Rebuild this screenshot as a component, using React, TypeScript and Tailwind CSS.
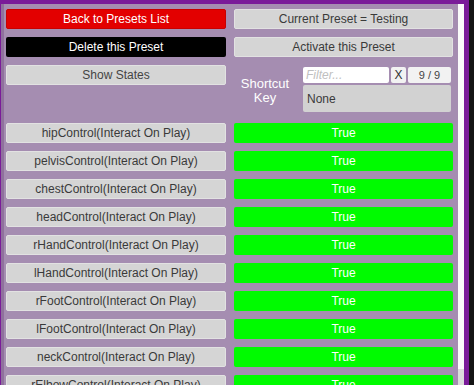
import React from "react";

const controls = [
  "hipControl",
  "pelvisControl",
  "chestControl",
  "headControl",
  "rHandControl",
  "lHandControl",
  "rFootControl",
  "lFootControl",
  "neckControl",
  "rElbowControl",
];

export default function App() {
  return (
    <div
      className="w-[474px] h-[385px] overflow-hidden bg-[#141414] flex text-[12px] leading-none"
      style={{ fontFamily: '"Liberation Sans", Arial, sans-serif' }}
    >
      {/* Window frame */}
      <div className="w-[469px] h-full bg-[#7a1b99] flex pt-[4px] pl-[1px] pr-[5px]">
        {/* Panel */}
        <div className="flex-1 bg-[#a58db1] border-l-[3px] border-[#8f719d] pl-[2px] pr-[5px] pt-[5px] flex flex-col">
          <div className="grid grid-cols-[220px_219px] gap-x-[8px]">
            <div className="flex flex-col gap-[8px]">
              <button className="h-[20px] rounded-[2px] bg-[#e30000] text-white border border-[#c80000]">
                Back to Presets List
              </button>
              <button className="h-[20px] rounded-[2px] bg-black text-white">Delete this Preset</button>
              <button className="h-[20px] rounded-[2px] bg-[#d5d5d5] text-[#444] border border-[#e2e2e2]">
                Show States
              </button>
            </div>
            <div className="flex flex-col gap-[8px]">
              <button className="h-[20px] rounded-[2px] bg-[#d5d5d5] text-[#3a3a3a] border border-[#e2e2e2]">
                Current Preset = Testing
              </button>
              <button className="h-[20px] rounded-[2px] bg-[#d5d5d5] text-[#3a3a3a] border border-[#e2e2e2]">
                Activate this Preset
              </button>
              {/* Shortcut key */}
              <div className="flex h-[48px]">
                <div className="w-[62px] flex flex-col items-center justify-center text-white text-[13px] leading-[14px] pt-[4px]">
                  <span>Shortcut</span>
                  <span>Key</span>
                </div>
                <div className="w-[148px] ml-[7px] flex flex-col pt-[2px]">
                  <div className="flex h-[16px] items-center">
                    <div className="w-[86px] h-full bg-white rounded-[2px] text-[#c0c0c0] italic px-[3px] flex items-center">
                      Filter...
                    </div>
                    <div className="w-[15px] ml-[2px] h-full bg-[#f2f2f2] rounded-[2px] text-[#333] flex items-center justify-center">
                      X
                    </div>
                    <div className="flex-1 ml-[2px] h-full bg-[#f2f2f2] rounded-[2px] text-[#444] text-[11px] flex items-center justify-center">
                      9 / 9
                    </div>
                  </div>
                  <div className="mt-[2px] h-[27px] bg-[#d2d2d2] rounded-[2px] text-[#3a3a3a] flex items-center px-[4px]">
                    None
                  </div>
                </div>
              </div>
            </div>
          </div>

          {/* Controls list */}
          <div className="grid grid-cols-[220px_219px] gap-x-[8px] gap-y-[8px] mt-[10px]">
            {controls.map((name) => (
              <React.Fragment key={name}>
                <button className="h-[20px] rounded-[2px] bg-[#d5d5d5] text-[#3a3a3a] border border-[#e2e2e2]">
                  {name}(Interact On Play)
                </button>
                <button className="h-[20px] rounded-[2px] bg-[#00fb00] text-white">True</button>
              </React.Fragment>
            ))}
          </div>
        </div>
        {/* Scrollbar */}
        <div className="w-[6px] h-full flex flex-col">
          <div className="flex-1 bg-[#fafafa]" />
          <div className="h-[16px] bg-[#dcdcdc]" />
        </div>
      </div>
    </div>
  );
}
